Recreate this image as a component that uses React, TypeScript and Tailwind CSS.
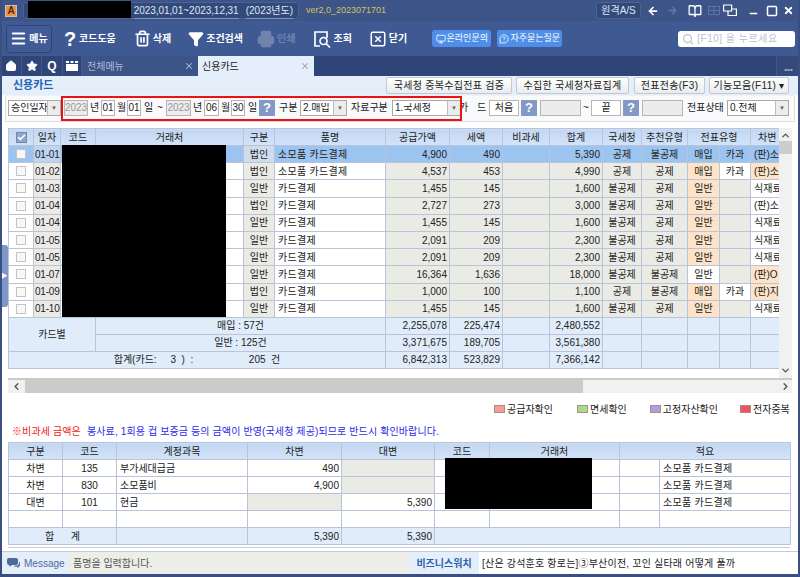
import { ArrowLeft, ArrowRight, BookOpen, Check, ChevronDown, ChevronLeft, ChevronRight, ChevronUp, Filter, Home, Menu, MessageCircleQuestion, Monitor, Printer, Search, Star, Trash2, X, Minus, Square, SquareX } from 'lucide-react';

const gridRows = [
  { date: '01-01', kind: '법인', item: '소모품 카드결제', supply: '4,900', tax: '490', total: '5,390', nts: '공제', rec: '불공제', t1: '매입', t2: '카과', debit: '(판)소', t1Orange: true, debitOrange: false, selected: true },
  { date: '01-02', kind: '법인', item: '소모품 카드결제', supply: '4,537', tax: '453', total: '4,990', nts: '공제', rec: '공제', t1: '매입', t2: '카과', debit: '(판)소', t1Orange: true, debitOrange: true },
  { date: '01-03', kind: '일반', item: '카드결제', supply: '1,455', tax: '145', total: '1,600', nts: '불공제', rec: '공제', t1: '일반', t2: '', debit: '식재료', t1Orange: true, debitOrange: false },
  { date: '01-04', kind: '법인', item: '카드결제', supply: '2,727', tax: '273', total: '3,000', nts: '불공제', rec: '공제', t1: '일반', t2: '', debit: '(판)소', t1Orange: true, debitOrange: false },
  { date: '01-04', kind: '일반', item: '카드결제', supply: '1,455', tax: '145', total: '1,600', nts: '불공제', rec: '공제', t1: '일반', t2: '', debit: '식재료', t1Orange: true, debitOrange: false },
  { date: '01-05', kind: '일반', item: '카드결제', supply: '2,091', tax: '209', total: '2,300', nts: '불공제', rec: '공제', t1: '일반', t2: '', debit: '식재료', t1Orange: true, debitOrange: false },
  { date: '01-05', kind: '일반', item: '카드결제', supply: '2,091', tax: '209', total: '2,300', nts: '불공제', rec: '공제', t1: '일반', t2: '', debit: '식재료', t1Orange: true, debitOrange: false },
  { date: '01-07', kind: '일반', item: '카드결제', supply: '16,364', tax: '1,636', total: '18,000', nts: '불공제', rec: '불공제', t1: '일반', t2: '', debit: '(판)O', t1Orange: false, debitOrange: true },
  { date: '01-09', kind: '법인', item: '카드결제', supply: '1,000', tax: '100', total: '1,100', nts: '공제', rec: '불공제', t1: '매입', t2: '카과', debit: '(판)지', t1Orange: true, debitOrange: true },
  { date: '01-10', kind: '일반', item: '카드결제', supply: '1,455', tax: '145', total: '1,600', nts: '불공제', rec: '공제', t1: '일반', t2: '', debit: '식재료', t1Orange: true, debitOrange: false },
];

const gridCols = [25, 27, 35, 148, 31, 111, 64, 53, 47, 53, 39, 46, 32, 31, 60];
const gridHeads = ['일자', '코드', '거래처', '구분', '품명', '공급가액', '세액', '비과세', '합계', '국세청', '추천유형'];

const slipCols = [54, 54, 131, 94, 93, 55, 130, 40, 131];
const slipRows = [
  { side: '차변', code: '135', name: '부가세대급금', debit: '490', credit: '', grayDebit: false, grayCredit: true },
  { side: '차변', code: '830', name: '소모품비', debit: '4,900', credit: '', grayDebit: false, grayCredit: true },
  { side: '대변', code: '101', name: '현금', debit: '', credit: '5,390', grayDebit: true, grayCredit: false },
  { side: '', code: '', name: '', debit: '', credit: '', grayDebit: false, grayCredit: false },
];

const th = 'border border-[#b9c3d9] bg-gradient-to-b from-[#c2d7f2] to-[#d3e3f8] font-normal text-center p-0';
const td = 'border border-[#b9c3d9] p-0 overflow-hidden whitespace-nowrap';
const sum = 'border border-[#b9c3d9] bg-[#e0ecfa] p-0 overflow-hidden whitespace-nowrap';

function Tool({ icon, label, dim, className }: { icon: React.ReactNode; label: string; dim?: boolean; className: string }) {
  return (
    <div className={`flex items-center gap-[2px] text-[10px] font-bold whitespace-nowrap ${dim ? 'text-[#6f83ad]' : 'text-white'} ${className}`}>
      {icon}
      <span>{label}</span>
    </div>
  );
}

function Field({ value, w, gray }: { value: string; w: string; gray?: boolean }) {
  return (
    <div className={`${w} h-[16px] shrink-0 border border-[#b5b5b5] flex items-center justify-center leading-none ${gray ? 'bg-[#ececec] text-[#9a9a9a]' : 'bg-white'}`}>
      {value}
    </div>
  );
}

function Picker({ value, w }: { value: string; w: string }) {
  return (
    <div className={`${w} h-[16px] shrink-0 border border-[#a9a9a9] bg-white flex items-center justify-between leading-none`}>
      <span className="pl-[2px] whitespace-nowrap overflow-hidden">{value}</span>
      <span className="w-[13px] h-full shrink-0 bg-[#ececec] border-l border-[#bdbdbd] flex items-center justify-center text-[#666] text-[6px]">▼</span>
    </div>
  );
}

function Help({ className = '' }: { className?: string }) {
  return <div className={`w-[16px] h-[16px] shrink-0 bg-[#8299c6] text-white font-bold text-[13px] flex items-center justify-center leading-none ${className}`}>?</div>;
}

function LightButton({ label, w, className = '' }: { label: string; w: string; className?: string }) {
  return (
    <div className={`${w} h-[17px] border border-[#c5c8cd] rounded-[2px] bg-gradient-to-b from-white to-[#e9ebee] flex items-center justify-center whitespace-nowrap tracking-[0.3px] ${className}`}>
      {label}
    </div>
  );
}

function Legend({ color, label, className }: { color: string; label: string; className: string }) {
  return (
    <div className={`flex items-center gap-[2px] whitespace-nowrap ${className}`}>
      <span className={`w-[11px] h-[8px] border border-[#a8917c] ${color}`} />
      <span>{label}</span>
    </div>
  );
}

export default function App() {
  return (
    <div className="relative w-[800px] h-[577px] overflow-hidden bg-white text-[10px] text-[#222] flex flex-col border-x-2 border-[#3a4f7f]" style={{ fontFamily: '"Liberation Sans", "Noto Sans CJK KR", sans-serif' }}>
      {/* 상단 타이틀바 */}
      <div className="h-[21px] shrink-0 -mx-[2px] bg-[#3c5488] flex items-center text-white">
        <div className="ml-[5px] w-[12px] h-[12px] shrink-0 bg-[#e8944c] border border-[#c9c0a8] text-[#5a2a10] text-[10px] font-bold flex items-center justify-center leading-none">A</div>
        <div className="ml-[6px] w-[276px] h-[17px] shrink-0 rounded-[3px] bg-[#33497a] border border-[#4a6296] flex items-center justify-end pr-[5px] gap-[7px] text-[#dfe6f5] whitespace-nowrap">
          <span className="border-b border-[#7f93bd] [word-spacing:-3px]">2023, 01, 01~2023, 12, 31</span>
          <span className="border-b border-[#7f93bd]">(2023년도)</span>
        </div>
        <span className="ml-[7px] w-[77px] shrink-0 text-[9px] text-[#d3c25c] whitespace-nowrap">ver2,0_2023071701</span>
        <div className="ml-[213px] w-[45px] h-[17px] shrink-0 rounded-[3px] bg-[#33497a] border border-[#4d648f] flex items-center justify-center text-[#dfe6f5] whitespace-nowrap">원격A/S</div>
        <ArrowLeft className="ml-[6px] w-[12px] h-[12px] shrink-0" strokeWidth={3.5} />
        <ArrowRight className="ml-[8px] w-[11px] h-[11px] shrink-0 text-[#6478a5]" strokeWidth={3.5} />
        <BookOpen className="ml-[10px] w-[14px] h-[14px] shrink-0" strokeWidth={2.2} />
        <svg className="ml-[6px] w-[12px] h-[11px] shrink-0 text-[#6478a5]" viewBox="0 0 13 12" fill="none" stroke="currentColor"><path d="M.5 1.5h12v9H.5zM.5 6h12M6.5 1.5v9" /></svg>
        <svg className="ml-[3px] w-[14px] h-[13px] shrink-0" viewBox="0 0 14 13" fill="none" stroke="currentColor" strokeWidth="1.2"><path d="M.6 1h8v6h-8zM5 7v4.500h8.400V5H8.600" /></svg>
        <Minus className="ml-[11px] w-[11px] h-[11px] mt-[6px] shrink-0" strokeWidth={3} />
        <Square className="ml-[7px] w-[12px] h-[12px] shrink-0" strokeWidth={3} />
        <X className="ml-[5px] w-[11px] h-[11px] shrink-0" strokeWidth={4} />
      </div>

      {/* 툴바 */}
      <div className="h-[35px] shrink-0 -mx-[2px] bg-[#3f5a93] flex items-center">
        <div className="ml-[6px] w-[46px] h-[28px] shrink-0 rounded-[3px] border border-[#2f4475] bg-[#415b96] flex items-center justify-center gap-[2px] text-white font-bold">
          <Menu className="w-[17px] h-[17px]" strokeWidth={3} />
          <span>메뉴</span>
        </div>
        <Tool className="ml-[11px]" label="코드도움" icon={<span className="text-[20px] font-bold leading-none w-[14px] text-center">?</span>} />
        <Tool className="ml-[18px]" label="삭제" icon={<Trash2 className="w-[17px] h-[17px]" strokeWidth={2.4} />} />
        <Tool className="ml-[17px]" label="조건검색" icon={<Filter className="w-[16px] h-[16px]" fill="currentColor" />} />
        <Tool className="ml-[14px]" dim label="인쇄" icon={<Printer className="w-[18px] h-[18px]" fill="currentColor" />} />
        <Tool className="ml-[18px]" label="조회" icon={<svg className="w-[18px] h-[18px]" viewBox="0 0 18 18" fill="none" stroke="currentColor" strokeWidth="1.7"><path d="M7 16H2V2h12v6" /><circle cx="10.500" cy="11" r="3.500" /><path d="m13 13.500 4 4" /></svg>} />
        <Tool className="ml-[17px]" label="닫기" icon={<SquareX className="w-[18px] h-[18px]" strokeWidth={2} />} />
        <div className="ml-[25px] w-[59px] h-[17px] shrink-0 rounded-[3px] bg-[#4f8ee8] flex items-center justify-center gap-[1px] text-[9px] text-white whitespace-nowrap">
          <Monitor className="w-[10px] h-[10px]" />
          <span>온라인문의</span>
        </div>
        <div className="ml-[6px] w-[65px] h-[17px] shrink-0 rounded-[3px] bg-[#4f8ee8] flex items-center justify-center gap-[1px] text-[9px] text-white whitespace-nowrap">
          <MessageCircleQuestion className="w-[10px] h-[10px]" />
          <span>자주묻는질문</span>
        </div>
        <div className="ml-[116px] w-[117px] h-[16px] shrink-0 rounded-[3px] bg-white flex items-center pl-[4px] gap-[3px] text-[#b9c2d2] tracking-[0.5px] whitespace-nowrap">
          <Search className="w-[12px] h-[12px]" strokeWidth={2.5} />
          <span>[F10] 을 누르세요</span>
        </div>
      </div>

      {/* 탭 */}
      <div className="h-[20px] shrink-0 -mx-[2px] bg-[#2f4577] flex items-stretch text-white">
        <div className="w-[22px] flex items-center justify-center border-r border-[#42598c]"><Home className="w-[12px] h-[12px]" fill="currentColor" /></div>
        <div className="w-[20px] flex items-center justify-center border-r border-[#42598c]"><Star className="w-[12px] h-[12px]" fill="currentColor" /></div>
        <div className="w-[21px] flex items-center justify-center border-r border-[#42598c] text-[12px] font-bold">Q</div>
        <div className="w-[19px] flex items-center justify-center border-r border-[#42598c]">
          <svg className="w-[12px] h-[10px]" viewBox="0 0 12 10" fill="currentColor"><path d="M0 3h12v7H0zM0 0h3v2H0zM4.500 0h3v2h-3zM9 0h3v2H9z" /></svg>
        </div>
        <div className="w-[116px] bg-[#3c5488] flex items-center justify-between pl-[5px] pr-[4px] text-[#aebbd4]">
          <span>전체메뉴</span>
          <X className="w-[10px] h-[10px]" strokeWidth={2.5} />
        </div>
        <div className="w-[116px] bg-[#e4effb] flex items-center justify-between pl-[4px] pr-[4px] text-[#222]">
          <span>신용카드</span>
          <X className="w-[10px] h-[10px] text-[#9aa3b2]" strokeWidth={2.5} />
        </div>
        <div className="ml-auto w-[24px] bg-[#344a7b] border-l border-[#42598c] flex items-end justify-center text-[8px] text-[#a8b6d2] leading-[12px]">•••</div>
      </div>

      {/* 화면 제목 */}
      <div className="h-[19px] shrink-0 -mx-[2px] bg-[#e4effb] flex items-center">
        <span className="ml-[13px] text-[11px] text-[#2462b5] font-bold">신용카드</span>
        <LightButton className="ml-auto" w="w-[126px]" label="국세청 중복수집전표 검증" />
        <LightButton className="ml-[4px]" w="w-[113px]" label="수집한 국세청자료집계" />
        <LightButton className="ml-[5px]" w="w-[71px]" label="전표전송(F3)" />
        <LightButton className="ml-[4px] mr-[11px]" w="w-[80px]" label="기능모음(F11) ▾" />
      </div>

      {/* 검색조건 */}
      <div className="h-[27px] shrink-0 mx-[3px] border border-[#d8dde6] border-t-[#eef2f8] bg-[#f9fafc] flex items-center whitespace-nowrap pb-[2px]">
        <div className="ml-[2px]"><Picker value="승인일자" w="w-[53px]" /></div>
        <div className="ml-[3px]"><Field value="2023" w="w-[24px]" gray /></div>
        <span className="ml-[2px] w-[9px]">년</span>
        <div className="ml-[2px]"><Field value="01" w="w-[14px]" /></div>
        <span className="ml-[2px] w-[9px]">월</span>
        <div className="ml-[1px]"><Field value="01" w="w-[14px]" /></div>
        <span className="ml-[3px] w-[9px]">일</span>
        <span className="ml-[4px] w-[9px]">~</span>
        <Field value="2023" w="w-[25px]" gray />
        <span className="ml-[2px] w-[9px]">년</span>
        <div className="ml-[2px]"><Field value="06" w="w-[15px]" /></div>
        <span className="ml-[2px] w-[9px]">월</span>
        <div className="ml-[1px]"><Field value="30" w="w-[14px]" /></div>
        <span className="ml-[3px] w-[9px]">일</span>
        <Help className="ml-[2px]" />
        <span className="ml-[4px] w-[18px]">구분</span>
        <div className="ml-[3px]"><Picker value="2.매입" w="w-[47px]" /></div>
        <span className="ml-[4px] w-[37px]">자료구분</span>
        <div className="ml-[4px]"><Picker value="1.국세청" w="w-[69px]" /></div>
        <span className="-ml-[2px] w-[24px] tracking-[3px]">카 드</span>
        <div className="ml-[6px]"><Field value="처음" w="w-[30px]" /></div>
        <Help className="ml-[2px]" />
        <div className="ml-[3px]"><Field value="" w="w-[41px]" gray /></div>
        <span className="ml-[2px] w-[6px]">~</span>
        <div className="ml-[2px]"><Field value="끝" w="w-[30px]" /></div>
        <Help className="ml-[2px]" />
        <div className="ml-[3px]"><Field value="" w="w-[41px]" gray /></div>
        <span className="ml-[4px] w-[37px]">전표상태</span>
        <div className="ml-[3px]"><Picker value="0.전체" w="w-[62px]" /></div>
      </div>

      {/* 카드 내역 그리드 */}
      <div className="mt-[6px] mx-[6px] w-[784px] h-[265px] shrink-0 flex flex-col">
        <div className="flex h-[252px] border-b-2 border-[#c9c9c9]">
          <div className="relative w-[771px] overflow-hidden">
            <table className="table-fixed border-collapse w-[802px] leading-[15px]">
              <colgroup>
                {gridCols.map((w, i) => <col key={i} style={{ width: w }} />)}
              </colgroup>
              <thead>
                <tr className="h-[17px]">
                  <th className={th}>
                    <span className="mx-auto w-[11px] h-[11px] bg-[#8fa7cf] border border-[#7089b5] flex items-center justify-center text-white"><Check className="w-[9px] h-[9px]" strokeWidth={4} /></span>
                  </th>
                  {gridHeads.map((h) => <th key={h} className={th}>{h}</th>)}
                  <th className={th} colSpan={2}>전표유형</th>
                  <th className={`${th} text-left pl-[7px]`}>차변</th>
                </tr>
              </thead>
              <tbody>
                {gridRows.map((r, i) => {
                  const blue = !!r.selected;
                  const plain = blue ? 'bg-[#9cc4f0]' : 'bg-white';
                  const gray = blue ? 'bg-[#9cc4f0]' : 'bg-[#ebebe6]';
                  return (
                    <tr key={i} className="h-[17.2px]">
                      <td className={`${td} ${plain}`}>
                        <span className="mx-auto block w-[10px] h-[10px] border border-[#c4c4c4] bg-[#f8f8f8]" />
                      </td>
                      <td className={`${td} pl-[1px] tracking-[-0.2px] ${blue ? 'bg-[#bcd6f2]' : 'bg-[#ebebe6]'}`}>{r.date}</td>
                      <td className={`${td} ${plain}`} />
                      <td className={`${td} ${plain}`} />
                      <td className={`${td} text-center ${blue ? 'bg-[#cfdcec]' : 'bg-[#ebebe6]'}`}>{r.kind}</td>
                      <td className={`${td} pl-[3px] tracking-[0.3px] ${plain}`}>{r.item}</td>
                      <td className={`${td} text-right pr-[2px] ${gray}`}>{r.supply}</td>
                      <td className={`${td} text-right pr-[2px] ${gray}`}>{r.tax}</td>
                      <td className={`${td} ${gray}`} />
                      <td className={`${td} text-right pr-[2px] ${gray}`}>{r.total}</td>
                      <td className={`${td} text-center ${gray}`}>{r.nts}</td>
                      <td className={`${td} text-center ${gray}`}>{r.rec}</td>
                      <td className={`${td} text-center ${blue ? 'bg-[#9cc4f0]' : r.t1Orange ? 'bg-[#fde4c8]' : 'bg-white'}`}>{r.t1}</td>
                      <td className={`${td} text-center ${blue ? 'bg-[#9cc4f0]' : r.t2 ? 'bg-white' : 'bg-[#ebebe6]'}`}>{r.t2}</td>
                      <td className={`${td} pl-[3px] ${blue ? 'bg-[#9cc4f0]' : r.debitOrange ? 'bg-[#fde4c8]' : 'bg-white'}`}>{r.debit}</td>
                    </tr>
                  );
                })}
                <tr className="h-[17px]">
                  <td className={`${sum} text-center`} colSpan={3} rowSpan={2}>카드별</td>
                  <td className={`${sum} text-center`} colSpan={3}>매입 : 57건</td>
                  <td className={`${sum} text-right pr-[2px]`}>2,255,078</td>
                  <td className={`${sum} text-right pr-[2px]`}>225,474</td>
                  <td className={sum} />
                  <td className={`${sum} text-right pr-[2px]`}>2,480,552</td>
                  <td className={sum} /><td className={sum} /><td className={sum} /><td className={sum} /><td className={sum} />
                </tr>
                <tr className="h-[17px]">
                  <td className={`${sum} text-center`} colSpan={3}>일반 : 125건</td>
                  <td className={`${sum} text-right pr-[2px]`}>3,371,675</td>
                  <td className={`${sum} text-right pr-[2px]`}>189,705</td>
                  <td className={sum} />
                  <td className={`${sum} text-right pr-[2px]`}>3,561,380</td>
                  <td className={sum} /><td className={sum} /><td className={sum} /><td className={sum} /><td className={sum} />
                </tr>
                <tr className="h-[17px]">
                  <td className={`${sum} text-center whitespace-pre`} colSpan={6}>{'합계(카드:     3  )  :                    205  건'}</td>
                  <td className={`${sum} text-right pr-[2px]`}>6,842,313</td>
                  <td className={`${sum} text-right pr-[2px]`}>523,829</td>
                  <td className={sum} />
                  <td className={`${sum} text-right pr-[2px]`}>7,366,142</td>
                  <td className={sum} /><td className={sum} /><td className={sum} /><td className={sum} /><td className={sum} />
                </tr>
              </tbody>
            </table>
            {/* 가림 처리 */}
            <div className="absolute left-[54px] top-[17px] w-[164px] h-[172px] bg-black" />
          </div>
          <div className="w-[13px] bg-[#f1f1f1] flex flex-col items-center text-[#555]">
            <ChevronUp className="w-[11px] h-[11px] mt-[2px]" strokeWidth={3} />
            <div className="w-[13px] h-[13px] bg-[#cdcdcd]" />
            <ChevronDown className="w-[11px] h-[11px] mt-auto mb-[2px]" strokeWidth={3} />
          </div>
        </div>
        <div className="h-[13px] bg-[#f1f1f1] flex items-center text-[#555]">
          <ChevronLeft className="w-[11px] h-[11px] ml-[3px]" strokeWidth={3} />
          <div className="ml-[3px] w-[558px] h-full bg-[#cbcbcb]" />
          <ChevronRight className="w-[11px] h-[11px] ml-auto mr-[1px]" strokeWidth={3} />
        </div>
      </div>

      {/* 범례 */}
      <div className="mt-[10px] h-[12px] shrink-0 flex items-center">
        <Legend className="ml-[492px]" color="bg-[#f79a9a]" label="공급자확인" />
        <Legend className="ml-[24px]" color="bg-[#a8dc8c]" label="면세확인" />
        <Legend className="ml-[23px]" color="bg-[#b29ce8]" label="고정자산확인" />
        <Legend className="ml-[22px]" color="bg-[#f5505f]" label="전자중복" />
      </div>

      <div className="mt-[10px] ml-[10px] h-[13px] shrink-0 flex items-center whitespace-nowrap tracking-[0.12px]">
        <span className="text-[#f02020]">※비과세 금액은</span>
        <span className="ml-[6px] text-[#2a2ae8]">봉사료, 1회용 컵 보증금 등의 금액이 반영(국세청 제공)되므로 반드시 확인바랍니다.</span>
      </div>

      {/* 전표 그리드 */}
      <div className="relative mt-[4px] ml-[6px] w-[782px] h-[106px] shrink-0 border-b border-[#c4cbdb]">
        <table className="table-fixed border-collapse w-[782px] leading-[15px]">
          <colgroup>
            {slipCols.map((w, i) => <col key={i} style={{ width: w }} />)}
          </colgroup>
          <thead>
            <tr className="h-[17px]">
              <th className={th}>구분</th>
              <th className={th}>코드</th>
              <th className={th}>계정과목</th>
              <th className={th}>차변</th>
              <th className={th}>대변</th>
              <th className={th}>코드</th>
              <th className={th}>거래처</th>
              <th className={th} colSpan={2}>적요</th>
            </tr>
          </thead>
          <tbody>
            {slipRows.map((r, i) => (
              <tr key={i} className="h-[17px]">
                <td className={`${td} text-center`}>{r.side}</td>
                <td className={`${td} text-center`}>{r.code}</td>
                <td className={`${td} pl-[3px]`}>{r.name}</td>
                <td className={`${td} text-right pr-[2px] ${r.grayDebit ? 'bg-[#ebebe6]' : ''}`}>{r.debit}</td>
                <td className={`${td} text-right pr-[2px] ${r.grayCredit ? 'bg-[#ebebe6]' : ''}`}>{r.credit}</td>
                <td className={td} />
                <td className={td} />
                <td className={td} />
                <td className={`${td} pl-[3px] tracking-[0.3px]`}>{r.side ? '소모품 카드결제' : ''}</td>
              </tr>
            ))}
            <tr className="h-[17px]">
              <td className={`${sum} text-center whitespace-pre`} colSpan={2}>{'합      계'}</td>
              <td className={sum} />
              <td className={`${sum} text-right pr-[2px]`}>5,390</td>
              <td className={`${sum} text-right pr-[2px]`}>5,390</td>
              <td className={sum} colSpan={4} />
            </tr>
          </tbody>
        </table>
        <div className="absolute left-[437px] top-[16px] w-[147px] h-[51px] bg-black" />
      </div>

      {/* 메시지바 */}
      <div className="mt-[3px] h-[23px] shrink-0 border-t border-[#c4cbdb] flex items-stretch">
        <div className="w-[67px] bg-[#e4effb] flex items-center gap-[4px] pl-[5px] text-[#4d6a99]">
          <svg className="w-[13px] h-[11px] shrink-0" viewBox="0 0 13 11" fill="currentColor"><path d="M2 0h7a2 2 0 0 1 2 2v3a2 2 0 0 1-2 2H5L2.500 9V7H2a2 2 0 0 1-2-2V2a2 2 0 0 1 2-2z" /><path d="M12 3.500c.6.300 1 .9 1 1.600v1.800c0 1-.8 1.600-1.600 1.600v1.500L9.300 8.500H6.500L8 7.600h1.500c1.400 0 2.500-1 2.500-2.400z" /></svg>
          <span>Message</span>
        </div>
        <div className="w-[340px] bg-[#eeeee9] flex items-center pl-[4px] text-[#555]">품명을 입력합니다.</div>
        <div className="w-[70px] bg-[#e4effb] flex items-center justify-center text-[#2f62a8] font-bold whitespace-nowrap">비즈니스워치</div>
        <div className="flex-1 flex items-center pl-[3px] whitespace-nowrap overflow-hidden tracking-[0.2px]">[산은 강석훈호 항로는]③부산이전, 꼬인 실타래 어떻게 풀까</div>
      </div>
      <div className="flex-1 -mx-[2px] bg-[#3a4f7f]" />

      {/* 겹쳐 올린 요소 */}
      <div className="absolute left-[26px] top-[1px] w-[103px] h-[17px] bg-black" />
      <div className="absolute left-[59px] top-[96px] w-[401px] h-[25px] border-2 border-[#f01010]" />
      <div className="absolute -left-[2px] top-[245px] w-[8px] h-[62px] bg-[#7e95c8] rounded-r-[3px] flex items-center justify-center text-white text-[7px]">▶</div>
    </div>
  );
}
